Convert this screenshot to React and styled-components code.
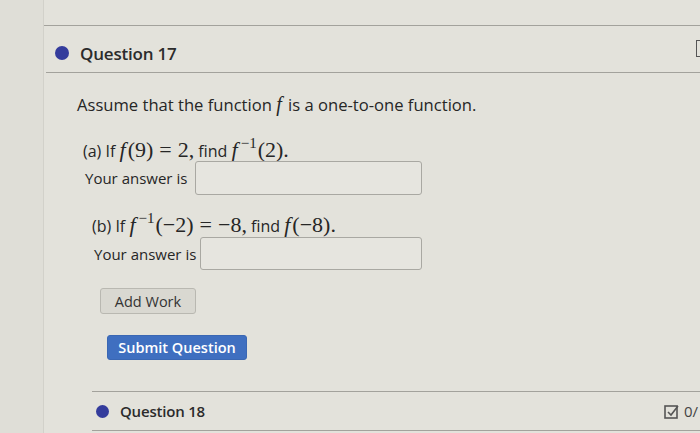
import React from "react";
import styled, { createGlobalStyle } from "styled-components";

const Global = createGlobalStyle`
  html, body { margin: 0; padding: 0; }
  body {
    background: #e3e2db;
    font-family: "Open Sans", "DejaVu Sans", sans-serif;
    color: #262626;
    width: 700px;
    height: 433px;
    overflow: hidden;
  }
`;

const Page = styled.div`
  display: grid;
  grid-template-columns: 44px 1fr;
  height: 433px;
`;

const Sidebar = styled.div`
  background: #dfded7;
  border-right: 1px solid #d2d1ca;
`;

const Main = styled.div`
  display: flex;
  flex-direction: column;
  padding-top: 25px;
  position: relative;
`;

const Rule = styled.div`
  height: 0;
  border-top: 1.5px solid ${(p) => p.$color || "#a3a29c"};
  margin-left: ${(p) => p.$inset || 0}px;
`;

const Header = styled.div`
  display: flex;
  align-items: center;
  gap: ${(p) => p.$gap || 11}px;
  height: ${(p) => p.$h || 46}px;
  padding-left: ${(p) => p.$inset || 0}px;
  padding-top: ${(p) => p.$pt || 0}px;
  box-sizing: border-box;
`;

const Dot = styled.span`
  width: ${(p) => p.$size || 14}px;
  height: ${(p) => p.$size || 14}px;
  border-radius: 50%;
  background: #343c9c;
  flex: none;
`;

const Title = styled.span`
  font-weight: 600;
  font-size: ${(p) => p.$size || 17}px;
  color: #2b2b2b;
  letter-spacing: -0.2px;
`;

const RightBracket = styled.span`
  position: absolute;
  right: -6px;
  top: 40px;
  width: 8px;
  height: 15px;
  border: 1.5px solid #555;
`;

const Body = styled.div`
  display: flex;
  flex-direction: column;
`;

const Prompt = styled.p`
  margin: 0;
  font-size: 16.6px;
  line-height: 20px;
  padding-left: ${(p) => p.$indent}px;
  margin-top: ${(p) => p.$top}px;
`;

const Part = styled.div`
  display: flex;
  flex-direction: column;
  padding-left: ${(p) => p.$indent}px;
  margin-top: ${(p) => p.$top}px;
`;

const Question = styled.div`
  font-size: 16px;
  line-height: 20px;
  height: 20px;
  color: #262626;
  white-space: nowrap;
`;

const M = styled.span`
  font-family: "Liberation Serif", "DejaVu Serif", serif;
  font-size: ${(p) => (p.$big ? 22 : 20)}px;
  line-height: 1;
  font-style: ${(p) => (p.$i ? "italic" : "normal")};
  margin-right: ${(p) => (p.$i ? 2 : 0)}px;
`;

const Op = styled.span`
  font-family: "Liberation Serif", "DejaVu Serif", serif;
  font-size: 22px;
  line-height: 1;
  margin: 0 6px;
`;

const Sup = styled.sup`
  font-family: "Liberation Serif", "DejaVu Serif", serif;
  font-size: 15px;
  line-height: 0;
  vertical-align: 9px;
  margin-left: 1px;
  margin-right: 1px;
`;

const AnswerRow = styled.div`
  display: flex;
  align-items: center;
  gap: ${(p) => p.$gap}px;
  margin-top: ${(p) => p.$top}px;
  padding-left: 2px;
  font-size: 15px;
`;

const AnswerBox = styled.div`
  width: ${(p) => p.$w}px;
  height: ${(p) => p.$h}px;
  border: 1.5px solid #a9a8a2;
  border-radius: 3px;
  background: #e6e5df;
  box-sizing: border-box;
`;

const Button = styled.button`
  font-family: "Open Sans", "DejaVu Sans", sans-serif;
  font-size: 14.5px;
  font-weight: ${(p) => (p.$primary ? 600 : 500)};
  color: ${(p) => (p.$primary ? "#ffffff" : "#333")};
  background: ${(p) => (p.$primary ? "#3f6fc0" : "#d9d8d1")};
  border: 1.5px solid ${(p) => (p.$primary ? "#3a67b3" : "#b9b8b1")};
  border-radius: 3px;
  width: ${(p) => p.$w}px;
  height: ${(p) => p.$h}px;
  padding: 0;
  align-self: flex-start;
  margin-left: ${(p) => p.$indent}px;
  margin-top: ${(p) => p.$top}px;
`;

const Footer = styled.div`
  margin-top: ${(p) => p.$top}px;
  display: flex;
  flex-direction: column;
`;

const Score = styled.span`
  margin-left: auto;
  display: flex;
  align-items: center;
  gap: 4px;
  font-size: 15px;
  color: #444;
  margin-right: 2px;
`;

function Inv() {
  return <Sup>−1</Sup>;
}

export default function App() {
  return (
    <>
      <Global />
      <Page>
        <Sidebar />
        <Main>
          <Rule />
          <Header $inset={11} $h={46} $pt={8}>
            <Dot />
            <Title>Question 17</Title>
          </Header>
          <RightBracket />
          <Rule $inset={2} />
          <Body>
            <Prompt $indent={33} $top={21}>
              Assume that the function <M $i>f</M> is a one-to-one function.
            </Prompt>
            <Part $indent={39} $top={24}>
              <Question>
                (a) If <M $i $big>f</M>
                <M $big>(9)</M>
                <Op>=</Op>
                <M $big>2,</M> find <M $i $big>f</M>
                <Inv />
                <M $big>(2).</M>
              </Question>
              <AnswerRow $top={2} $gap={8}>
                <span>Your answer is</span>
                <AnswerBox $w={227} $h={34} />
              </AnswerRow>
            </Part>
            <Part $indent={48} $top={19}>
              <Question>
                (b) If <M $i $big>f</M>
                <Inv />
                <M $big>(−2)</M>
                <Op>=</Op>
                <M $big>−8,</M> find <M $i $big>f</M>
                <M $big>(−8).</M>
              </Question>
              <AnswerRow $top={3} $gap={4}>
                <span>Your answer is</span>
                <AnswerBox $w={222} $h={33} />
              </AnswerRow>
            </Part>
            <Button $w={96} $h={26} $indent={56} $top={18}>
              Add Work
            </Button>
            <Button $primary $w={140} $h={25} $indent={63} $top={21}>
              Submit Question
            </Button>
          </Body>
          <Footer $top={31}>
            <Rule $inset={48} />
            <Header $inset={52} $h={38} $gap={11}>
              <Dot $size={13} />
              <Title $size={15}>Question 18</Title>
              <Score>
                <svg width="16" height="15" viewBox="0 0 16 15" fill="none" stroke="#555" strokeWidth="1.6">
                  <rect x="1" y="2" width="12" height="12" />
                  <path d="M4 8l3 3 7-9" />
                </svg>
                0/
              </Score>
            </Header>
            <Rule $inset={48} />
          </Footer>
        </Main>
      </Page>
    </>
  );
}
